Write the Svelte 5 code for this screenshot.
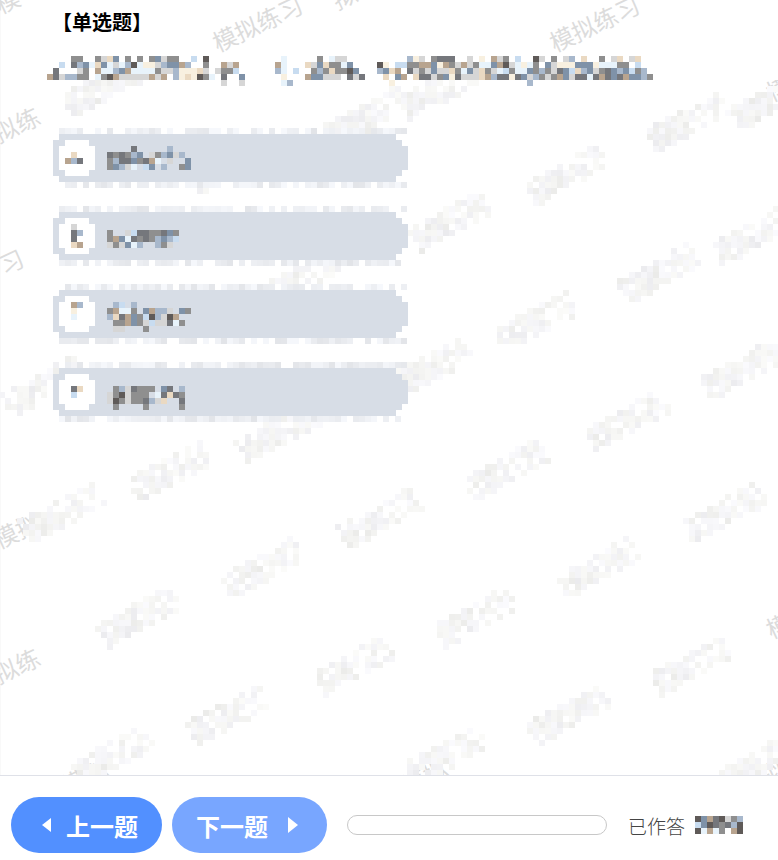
<script>
  // the source picture is pixelated: 6px cells on a grid starting at x=47, y=56
  const CELL = 6;
  const palette = {
    a: '#8f8f8f', b: '#c8dcf0', c: '#7f92a8', d: '#ead9c2', e: '#b8a48f',
    f: '#5f5a58', g: '#d6d6d6', h: '#e8f3fb', i: '#a8b8cc', j: '#f8f0e0', k: '#75777c'
  };

  const question = [
    '....aa..agdc.a.a.acgaa..b.f............h.....a.hgg..........ijg.akkk..g.j.ega.b..fg.a.gi.d..a.gd.gd..',
    '..b.kichdchghifhjjgicceI..a..ege......eh...dgcdaahc....fj.bbaaeecjeagegahhcefghjha.cgjjjcccjhhhaa.b.',
    '.k...ga.ehhicehhhhaggijjjdg.gaab......ih.b..aiadaafc...icde.kgagcggdahcgdaghbahhcaiagkcbdicgakcicbai.',
    'ekgiiaa.hafegggggege.ijdjfah.k..c......j...eccggg.kgk...d.ce.dkkgacjkgggdeikkjkcgiagaecgkkhkekckeccia',
    '.............................g..g......hi................j......................i....................'
  ];

  const options = [
    {
      badge: ['......', '......', '..d...', '.eik..'],
      label: [
        '..............',
        '....k.....i...',
        'kakaic.gaicgi.',
        'aikkcakeh g..c',
        'acigh bc.i..ac'
      ]
    },
    {
      badge: ['......', '..g...', '..ki..', '..k...', '..de..'],
      label: [
        '..............',
        '..............',
        'a..gbkkaakca..',
        'aechkakaicib..',
        'gagchi..iag...'
      ]
    },
    {
      badge: ['......', '..ei..', '..j...', '..h...'],
      label: [
        '..............',
        '.ib.i.........',
        'aehha.ceiig.ca',
        'idkecabfigfe..',
        '.aaecagbggkha.',
        '.gg...a.......'
      ]
    },
    {
      badge: ['......', '......', '..kd..', '..b...'],
      label: [
        '..............',
        '..............',
        '.aigkaaa.ck.i.',
        'gafgaaa.hkdka.',
        'gfagaakigd..k.',
        '.a....a.....a.'
      ]
    }
  ];

  const answered = ['fcekfgai', 'bcfkakif', 'fheharef'];

  function toCells(rows) {
    const out = [];
    rows.forEach((row, y) => {
      [...row].forEach((ch, x) => {
        const fill = palette[ch.toLowerCase()];
        if (fill) out.push({ x: x * CELL, y: y * CELL, fill });
      });
    });
    return out;
  }

  function rnd(n) {
    const s = Math.sin(n * 12.9898) * 43758.5453;
    return s - Math.floor(s);
  }

  // broken pale row that sits along a pill's top or bottom edge
  function fringe(seed) {
    const out = [];
    for (let i = 0; i < 58; i++) {
      const r = rnd(seed * 31 + i);
      if (r < 0.3) continue;
      const l = Math.round(226 + rnd(seed + i * 17) * 20);
      out.push({ x: i * CELL, y: 0, fill: `rgb(${l},${l + 2},${l + 6})` });
    }
    return out;
  }

  // pixelated watermark stamps
  const stamps = [
    [103, 88], [232, 165], [367, 117], [440, 90], [687, 122], [567, 175], [772, 100],
    [449, 222], [308, 275], [660, 273], [536, 322], [432, 367], [42, 387], [754, 235],
    [742, 370], [628, 420], [278, 433], [169, 472], [506, 470], [62, 513], [380, 518],
    [725, 513], [263, 568], [598, 568], [139, 617], [476, 617], [355, 665], [692, 665],
    [228, 715], [568, 715], [114, 755], [447, 755], [760, 763]
  ];

  const stampCells = [];
  stamps.forEach(([cx, cy], s) => {
    const cos = Math.cos((28 * Math.PI) / 180);
    const sin = Math.sin((28 * Math.PI) / 180);
    for (let gy = -5; gy <= 5; gy++) {
      for (let gx = -9; gx <= 9; gx++) {
        const x = Math.round((cx - 5) / CELL) * CELL + 5 + gx * CELL;
        const y = Math.round((cy - 2) / CELL) * CELL + 2 + gy * CELL;
        const dx = x + 3 - cx;
        const dy = y + 3 - cy;
        const u = dx * cos - dy * sin;
        const v = dx * sin + dy * cos;
        if (Math.abs(u) > 42 || Math.abs(v) > 13) continue;
        const r = rnd(s * 97 + gx * 13 + gy * 131 + 5);
        // the lower left end of a stamp reads denser than the upper right
        if (r < (u < 0 ? 0.12 : 0.32)) continue;
        const l = Math.round(254 - (u < 0 ? 6 : 2) - r * r * 13);
        const tint = rnd(s + gx * 7 + gy * 3) > 0.5 ? 3 : -2;
        stampCells.push({ x, y, fill: `rgb(${l},${l},${l + tint})` });
      }
    }
  });

  // the few stamps left sharp
  const marks = [
    { x: 258, y: 25, t: '模拟练习' },
    { x: 595, y: 25, t: '模拟练习' },
    { x: 8, y: 2, t: '模' },
    { x: 345, y: -2, t: '拟' },
    { x: 17, y: 126, t: '拟练' },
    { x: 12, y: 263, t: '习' },
    { x: 17, y: 532, t: '模拟' },
    { x: 17, y: 667, t: '拟练' },
    { x: 779, y: 90, t: '模' },
    { x: 779, y: 627, t: '模' },
    { x: 85, y: 778, t: '模拟' },
    { x: 425, y: 778, t: '模拟' },
    { x: 762, y: 778, t: '模拟' }
  ];
</script>

{#snippet mosaic(rows)}
  <svg
    class="mosaic"
    width={Math.max(...rows.map((r) => r.length)) * CELL}
    height={rows.length * CELL}
    shape-rendering="crispEdges"
  >
    {#each toCells(rows) as c}
      <rect x={c.x} y={c.y} width={CELL} height={CELL} fill={c.fill} />
    {/each}
  </svg>
{/snippet}

{#snippet edge(seed, cls)}
  <svg class="fringe {cls}" width="348" height="6" shape-rendering="crispEdges">
    {#each fringe(seed) as c}
      <rect x={c.x} y={c.y} width={CELL} height={CELL} fill={c.fill} />
    {/each}
  </svg>
{/snippet}

<div class="page">
  <div class="watermarks">
    {#each marks as m}
      <span class="mark" style="left:{m.x}px;top:{m.y}px">{m.t}</span>
    {/each}
    <svg class="stamps" width="778" height="775" shape-rendering="crispEdges">
      {#each stampCells as c}
        <rect x={c.x} y={c.y} width={CELL} height={CELL} fill={c.fill} />
      {/each}
    </svg>
  </div>

  <main class="paper">
    <h1 class="kind">【单选题】</h1>
    <div class="question">{@render mosaic(question)}</div>

    <div class="options">
      {#each options as opt, i}
        <div class="option">
          {@render edge(i * 2 + 3, 'top')}
          <div class="pill">
            <div class="badge">{@render mosaic(opt.badge)}</div>
            <div class="label">{@render mosaic(opt.label)}</div>
          </div>
          {@render edge(i * 2 + 4, 'bottom')}
        </div>
      {/each}
    </div>
  </main>

  <footer class="bar">
    <button class="nav prev">
      <svg width="9" height="14" viewBox="0 0 9 14"><polygon points="9,0 0,7 9,14" fill="#fff" /></svg>
      <span>上一题</span>
    </button>
    <button class="nav next">
      <span>下一题</span>
      <svg width="10" height="16" viewBox="0 0 10 16"><polygon points="0,0 10,8 0,16" fill="#fff" /></svg>
    </button>
    <div class="progress"></div>
    <span class="done">已作答</span>
    <div class="count">{@render mosaic(answered)}</div>
  </footer>
</div>

<style>
  :global(body) {
    margin: 0;
    background: #fff;
  }

  .page {
    position: relative;
    display: flex;
    flex-direction: column;
    width: 778px;
    height: 860px;
    overflow: hidden;
    font-family: 'Liberation Sans', 'Noto Sans CJK SC', sans-serif;
    box-shadow: inset 1px 0 0 #f9f9f9;
  }

  .watermarks {
    position: absolute;
    left: 0;
    top: 0;
    width: 778px;
    height: 775px;
    overflow: hidden;
  }

  .stamps {
    position: absolute;
    left: 0;
    top: 0;
  }

  .mark {
    position: absolute;
    font-size: 24px;
    line-height: 1;
    white-space: nowrap;
    color: #dcdcdc;
    transform: translate(-50%, -50%) rotate(-25deg);
  }

  .mosaic {
    display: block;
  }

  .paper {
    position: relative;
    flex: 1;
    padding: 12px 0 0 47px;
  }

  .kind {
    margin: 0 0 22px 5px;
    font-size: 20px;
    line-height: 22px;
    font-weight: 700;
    color: #000;
  }

  .question {
    height: 24px;
    margin-bottom: 54px;
    background: #fff;
  }

  .options {
    display: flex;
    flex-direction: column;
    gap: 30px;
    margin-left: 6px;
  }

  .option {
    position: relative;
    width: 357px;
    height: 48px;
  }

  .fringe {
    position: absolute;
    left: 6px;
  }

  .fringe.top {
    top: -6px;
  }

  .fringe.bottom {
    bottom: -6px;
  }

  .pill {
    display: flex;
    align-items: center;
    gap: 12px;
    height: 48px;
    padding-left: 6px;
    box-sizing: border-box;
    background: #d7dde6;
    clip-path: polygon(
      6px 0, 343px 0, 343px 6px, 349px 6px, 349px 12px, 355px 12px,
      355px 36px, 349px 36px, 349px 42px, 343px 42px, 343px 48px,
      6px 48px, 6px 42px, 0 42px, 0 6px, 6px 6px
    );
  }

  .badge {
    width: 36px;
    height: 36px;
    flex-shrink: 0;
    background: #fff;
    clip-path: polygon(
      6px 0, 30px 0, 30px 6px, 36px 6px, 36px 30px, 30px 30px,
      30px 36px, 6px 36px, 6px 30px, 0 30px, 0 6px, 6px 6px
    );
  }

  .label {
    height: 36px;
  }

  .bar {
    position: relative;
    display: flex;
    align-items: center;
    height: 85px;
    box-sizing: border-box;
    padding: 21px 0 7px 11px;
    background: #fff;
    border-top: 1px solid #dfe1e8;
  }

  .nav {
    display: flex;
    align-items: center;
    height: 56px;
    border: none;
    border-radius: 28px;
    color: #fff;
    font-family: inherit;
    font-size: 24px;
    font-weight: 700;
    box-sizing: border-box;
  }

  .prev {
    width: 151px;
    gap: 15px;
    padding: 0 0 0 31px;
    background: #5290ff;
  }

  .next {
    width: 155px;
    gap: 20px;
    margin-left: 10px;
    padding: 0 0 0 24px;
    background: #78a6ff;
  }

  .progress {
    width: 260px;
    height: 20px;
    margin-left: 20px;
    box-sizing: border-box;
    border: 1px solid #c8c8c8;
    border-radius: 10px;
    background: #fff;
  }

  .done {
    margin-left: 21px;
    font-size: 19px;
    font-weight: 300;
    color: #444;
  }

  .count {
    margin-left: 10px;
  }
</style>
